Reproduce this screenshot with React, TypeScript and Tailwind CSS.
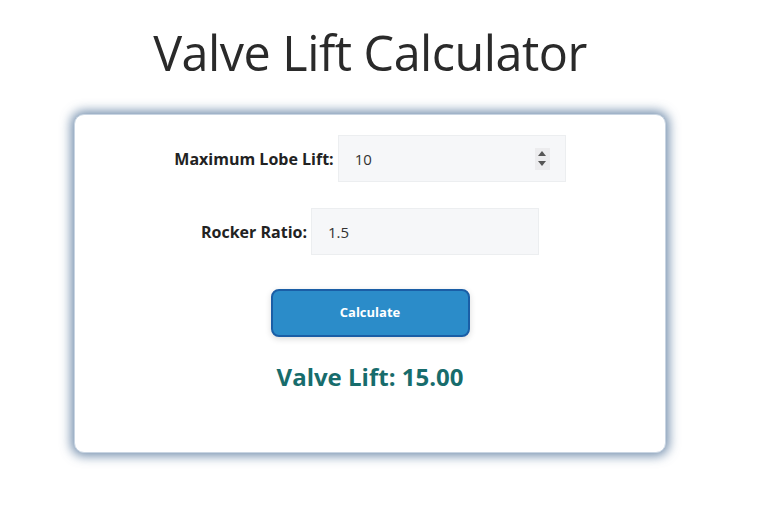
import { useState } from 'react';

function Spinner() {
  return (
    <div className="absolute right-[16px] top-1/2 -translate-y-1/2 w-[15px] h-[22px] bg-[#ececee] flex flex-col items-center justify-center gap-[5px]">
      <svg width="8" height="5" viewBox="0 0 8 5"><path d="M4 0 L8 5 L0 5 Z" fill="#555" /></svg>
      <svg width="8" height="5" viewBox="0 0 8 5"><path d="M0 0 L8 0 L4 5 Z" fill="#555" /></svg>
    </div>
  );
}

export default function App() {
  const [lobe, setLobe] = useState('10');
  const [ratio, setRatio] = useState('1.5');
  const [result, setResult] = useState('15.00');

  const calc = () => {
    const v = parseFloat(lobe) * parseFloat(ratio);
    setResult(isNaN(v) ? '0.00' : v.toFixed(2));
  };

  return (
    <div className="w-[768px] h-[505px] bg-white font-['Open_Sans',sans-serif] text-[#222]">
      <div className="w-[740px] flex flex-col items-center">
        <h1 className="mt-[16px] text-[48.5px] leading-[72px] text-[#2a2a2a] font-normal tracking-[-0.5px]">Valve Lift Calculator</h1>
        <div className="mt-[26px] w-[592px] h-[339px] bg-white rounded-[10px] border border-[#c9d5e2] shadow-[0_0_11px_3px_rgba(70,105,145,0.75)] flex flex-col items-center pt-[20px]">
          <div className="flex items-center gap-[4px]">
            <label className="text-[16px] font-bold text-[#222]">Maximum Lobe Lift:</label>
            <div className="relative">
              <input
                value={lobe}
                onChange={(e) => setLobe(e.target.value)}
                className="w-[228px] h-[47px] bg-[#f6f7f9] border border-[#eceef0] pl-[16px] text-[15px] text-[#333] outline-none"
              />
              <Spinner />
            </div>
          </div>
          <div className="flex items-center gap-[4px] mt-[26px]">
            <label className="text-[16px] font-bold text-[#222]">Rocker Ratio:</label>
            <input
              value={ratio}
              onChange={(e) => setRatio(e.target.value)}
              className="w-[228px] h-[47px] bg-[#f6f7f9] border border-[#eceef0] pl-[16px] text-[15px] text-[#333] outline-none"
            />
          </div>
          <button
            onClick={calc}
            className="mt-[34px] w-[199px] h-[48px] bg-[#2b8cc9] border-2 border-[#1a5ea6] rounded-[8px] text-white text-[13px] font-bold shadow-[0_2px_6px_rgba(0,0,0,0.15)]"
          >
            Calculate
          </button>
          <div className="mt-[22px] text-[24px] font-bold text-[#176c6c]">Valve Lift: {result}</div>
        </div>
      </div>
    </div>
  );
}
